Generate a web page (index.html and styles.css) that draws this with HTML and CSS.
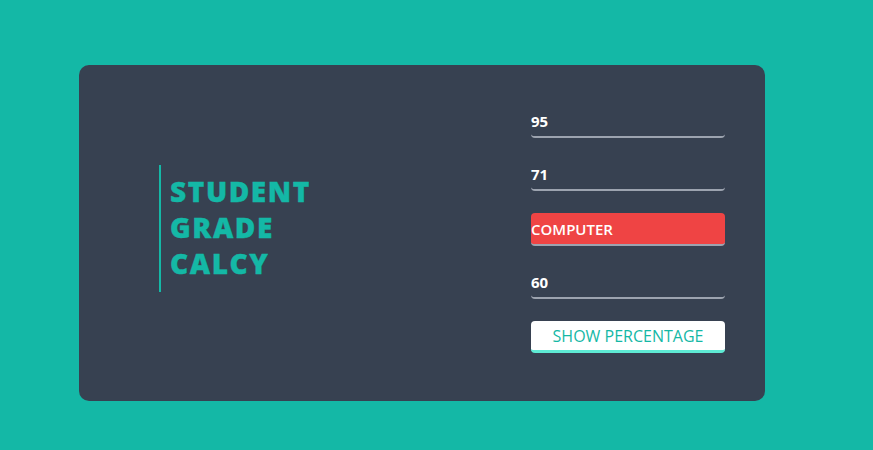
FILE: index.html
```html
<!DOCTYPE html>
<html>
<head>
<meta charset="utf-8">
<link rel="stylesheet" href="styles.css">
</head>
<body>
<div class="card">
  <div class="title">
    <h1>STUDENT<br>GRADE<br>CALCY</h1>
  </div>
  <form class="form">
    <input class="field" type="text" value="95">
    <input class="field" type="text" value="71">
    <div class="select">COMPUTER</div>
    <input class="field" type="text" value="60">
    <button class="btn" type="button">SHOW PERCENTAGE</button>
  </form>
</div>
</body>
</html>
```
FILE: styles.css
```css
html, body {
  margin: 0;
  padding: 0;
}
body {
  background: #14b8a6;
  height: 450px;
  font-family: "Open Sans", "Noto Sans", sans-serif;
  padding: 65px 0 0 79px;
  box-sizing: border-box;
}
.card {
  width: 686px;
  height: 336px;
  background: #374151;
  border-radius: 10px;
  box-sizing: border-box;
  padding: 40px 40px 48px 80px;
  display: flex;
  justify-content: space-between;
  align-items: center;
}
.title {
  border-left: 2px solid #14b8a6;
  padding: 8px 0 11px 9px;
  margin-top: -1px;
}
.title h1 {
  margin: 0;
  color: #14b8a6;
  font-size: 28px;
  font-weight: 800;
  line-height: 36px;
  letter-spacing: 1.6px;
  -webkit-text-stroke: 0.4px #14b8a6;
}
.form {
  width: 194px;
  display: flex;
  flex-direction: column;
  gap: 20px;
  align-self: flex-start;
}
.field {
  height: 33px;
  box-sizing: border-box;
  background: transparent;
  border: none;
  border-bottom: 2px solid #9ca3af;
  border-radius: 0 0 4px 4px;
  color: #fff;
  font-family: inherit;
  font-size: 15px;
  font-weight: 700;
  padding: 0;
  outline: none;
}
.select {
  height: 33px;
  box-sizing: border-box;
  background: #ef4444;
  border-bottom: 2px solid #9ca3af;
  border-radius: 4px;
  color: #fff;
  font-size: 15px;
  font-weight: 600;
  display: flex;
  align-items: center;
  margin-top: 2px;
}
.btn {
  height: 32px;
  box-sizing: border-box;
  background: #fff;
  border: none;
  border-bottom: 3px solid #5eead4;
  border-radius: 4px;
  color: #14b8a6;
  font-family: inherit;
  font-size: 16px;
  font-weight: 400;
  padding: 0;
  margin-top: 2px;
}
```
